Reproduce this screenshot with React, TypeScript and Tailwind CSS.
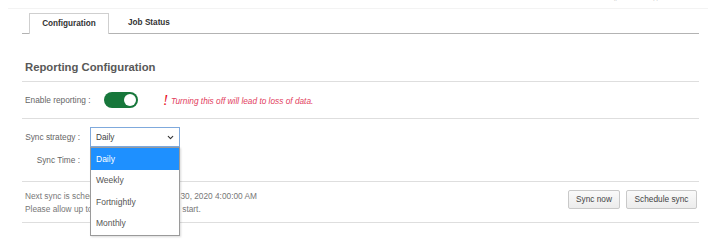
import { ChevronDown } from "lucide-react";

const font = { fontFamily: '"Liberation Sans", Arial, sans-serif' };

const SyncDropdown = () => {
  const options = ["Daily", "Weekly", "Fortnightly", "Monthly"];
  return (
    <div className="relative w-[90px]">
      <div className="flex h-[20px] items-center justify-between border border-[#7fa9dc] bg-white pl-[5px] pr-[4px] text-[8.3px] text-[#444]">
        <span>Daily</span>
        <ChevronDown size={9} strokeWidth={3} className="text-[#333]" />
      </div>
      <div className="absolute left-0 top-full z-10 w-[90px] border border-[#9a9a9a] bg-white shadow-[1px_1px_2px_rgba(0,0,0,0.15)]">
        {options.map((o, i) => (
          <div
            key={o}
            className={
              i === 0
                ? "flex h-[22px] items-center bg-[#1e90ff] pl-[5px] text-[8.5px] text-white"
                : "flex h-[21.5px] items-center pl-[5px] text-[8.5px] text-[#555]"
            }
          >
            {o}
          </div>
        ))}
      </div>
    </div>
  );
};

export default function App() {
  return (
    <div className="h-[241px] w-[723px] bg-white" style={font}>
      <div className="mx-[8px] flex h-[9px] w-[700px] justify-end overflow-hidden border-b border-[#f3f3f3] pr-[50px] text-[6px] text-[#aaa]">
        <span className="-mt-[5px]">..</span>
        <span className="-mt-[5px] ml-[36px]">. .</span>
      </div>

      <div className="ml-[22px] mr-[24px] mt-[4px] flex border-b border-[#b3b3b3]">
        <div className="-mb-px ml-[7px] flex h-[21px] w-[80px] items-center justify-center border border-b-0 border-[#cfcfcf] bg-white text-[8.2px] font-bold text-[#333]">
          Configuration
        </div>
        <div className="flex h-[20px] w-[80px] items-center justify-center text-[8.2px] font-bold text-[#333]">
          Job Status
        </div>
      </div>

      <div className="ml-[22px] mr-[24px]">
        <div className="border-b border-[#dedede] pb-[6px] pl-[3px] pt-[25px] text-[11.3px] font-bold leading-[16px] text-[#585858]">
          Reporting Configuration
        </div>

        <div className="flex h-[37px] items-center border-b border-[#dedede] pl-[3px] text-[8.3px] text-[#666]">
          <span className="w-[79px]">Enable reporting :</span>
          <div className="flex h-[16px] w-[34px] items-center justify-end rounded-full bg-[#17773b] pr-[2px]">
            <div className="h-[12px] w-[12px] rounded-full bg-white" />
          </div>
          <span className="ml-[25px] mr-[3px] text-[15px] italic leading-none text-[#e8101e]" style={{ fontFamily: '"Liberation Serif", serif' }}>
            !
          </span>
          <span className="mt-[2px] italic text-[#e2405e]">Turning this off will lead to loss of data.</span>
        </div>

        <div className="flex flex-col gap-[3px] border-b border-[#dedede] pb-[11px] pt-[8px] text-[8.3px] text-[#666]">
          <div className="flex items-center">
            <span className="w-[58px] text-right">Sync strategy :</span>
            <div className="ml-[10px]">
              <SyncDropdown />
            </div>
          </div>
          <div className="flex h-[20px] items-center">
            <span className="w-[58px] text-right">Sync Time :</span>
          </div>
        </div>

        <div className="flex items-start justify-between border-b border-[#dedede] pb-[6px] pl-[3px] pt-[8px] text-[8.3px] leading-[13px] text-[#777]">
          <div>
            <div>Next sync is scheduled at Mon November 30, 2020 4:00:00 AM</div>
            <div>Please allow up to 10 minutes for syncs to start.</div>
          </div>
          <div className="mr-[2px] flex gap-[6px]">
            <button className="h-[19px] w-[52px] rounded-[2px] border border-[#c9c9c9] bg-gradient-to-b from-[#fafafa] to-[#ececec] text-[8.3px] text-[#444]">
              Sync now
            </button>
            <button className="h-[19px] w-[71px] rounded-[2px] border border-[#c9c9c9] bg-gradient-to-b from-[#fafafa] to-[#ececec] text-[8.3px] text-[#444]">
              Schedule sync
            </button>
          </div>
        </div>
      </div>
    </div>
  );
}
